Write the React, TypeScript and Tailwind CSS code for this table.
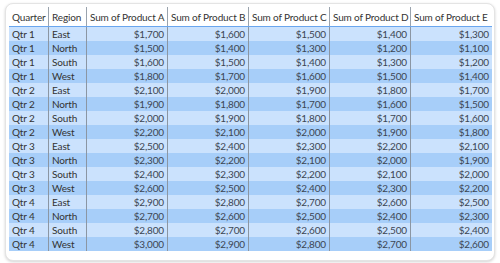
import React from "react";

const base = [1700, 1500, 1600, 1800, 2100, 1900, 2000, 2200, 2500, 2300, 2400, 2600, 2900, 2700, 2800, 3000];
const regions = ["East", "North", "South", "West"];
const fmt = (n: number) => "$" + n.toLocaleString("en-US");

const rows = base.map((a, i) => ({
  q: `Qtr ${Math.floor(i / 4) + 1}`,
  r: regions[i % 4],
  v: [a, a - 100, a - 200, a - 300, a - 400],
}));

const cols = "grid grid-cols-[40px_38px_81px_81px_81px_81px_81px]";

export default function App() {
  return (
    <div className="w-[500px] h-[263px] bg-white pt-[3px] pl-[5px]" style={{ fontFamily: 'Lato, "Noto Sans", sans-serif' }}>
      <div className="w-[490px] h-[258px] rounded-[8px] border border-[#e4e4e4] bg-white shadow-[0_1px_3px_rgba(0,0,0,0.18)] pt-[3px] pl-[3px]">
        <div className="w-[483px] text-[10px] tracking-[-0.15px] text-[#333] whitespace-nowrap">
          <div className={`${cols} h-[20px] border-b border-[#6aa6ee] bg-white`}>
            {["Quarter", "Region", "Sum of Product A", "Sum of Product B", "Sum of Product C", "Sum of Product D", "Sum of Product E"].map((h, i) => (
              <div key={h} className={`flex items-center px-[3px] leading-none ${i < 6 ? "border-r border-[#9aa3ad]" : ""}`}>
                {h}
              </div>
            ))}
          </div>
          {rows.map((row, i) => (
            <div key={i} className={`${cols} h-[14px] ${i % 2 === 0 ? "bg-[#cbe2fd]" : "bg-[#a7cef9]"}`}>
              <div className="flex items-center px-[3px] leading-none border-r border-[#8b96a3]">{row.q}</div>
              <div className="flex items-center px-[3px] leading-none border-r border-[#8b96a3]">{row.r}</div>
              {row.v.map((v, j) => (
                <div key={j} className={`flex items-center justify-end px-[3px] leading-none text-[#3c4654] ${j < 4 ? "border-r border-[#8b96a3]" : ""}`}>
                  {fmt(v)}
                </div>
              ))}
            </div>
          ))}
        </div>
      </div>
    </div>
  );
}
